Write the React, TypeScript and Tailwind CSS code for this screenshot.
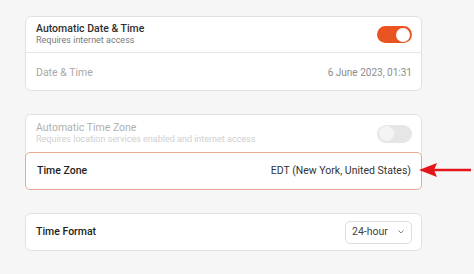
import React from "react";

function Toggle({ on }: { on: boolean }) {
  return on ? (
    <div className="flex h-[17px] w-[35px] items-center justify-end rounded-full bg-[#e95420] pr-[2px]">
      <div className="h-[14px] w-[14px] rounded-full bg-white" />
    </div>
  ) : (
    <div className="flex h-[18px] w-[35px] items-center justify-start rounded-full bg-[#e6e6e6] pl-[2px]">
      <div className="h-[15px] w-[15px] rounded-full bg-[#f4f4f4]" />
    </div>
  );
}

export default function App() {
  return (
    <div
      className="relative h-[274px] w-[474px] overflow-hidden bg-[#f6f6f6] pl-[25px] pt-[16px]"
      style={{ fontFamily: 'Roboto, "Noto Sans", sans-serif' }}
    >
      <div className="flex w-[397px] flex-col gap-[23px]">
        {/* Card 1 */}
        <div className="rounded-[6px] border border-[#e2e2e2] bg-white">
          <div className="flex h-[36px] items-center justify-between border-b border-[#e6e6e6] pl-[10px] pr-[9px]">
            <div className="flex flex-col leading-none">
              <span className="text-[10.5px] font-medium text-[#2f2f2f]">Automatic Date &amp; Time</span>
              <span className="mt-[2px] text-[9px] text-[#7a7a7a]">Requires internet access</span>
            </div>
            <Toggle on />
          </div>
          <div className="flex h-[37px] items-center justify-between pl-[10px] pr-[9px] pt-[2px]">
            <span className="text-[10.5px] text-[#a8a8a8]">Date &amp; Time</span>
            <span className="text-[10px] text-[#8c8c8c]">6 June 2023, 01:31</span>
          </div>
        </div>

        {/* Card 2 */}
        <div className="rounded-[6px] border border-[#e2e2e2] bg-white">
          <div className="flex h-[37px] items-center justify-between pl-[10px] pr-[9px]">
            <div className="flex flex-col leading-none">
              <span className="text-[10.5px] text-[#b0b0b0]">Automatic Time Zone</span>
              <span className="mt-[2px] text-[9px] text-[#cfcfcf]">
                Requires location services enabled and internet access
              </span>
            </div>
            <Toggle on={false} />
          </div>
          <div className="-mx-px -mb-px flex h-[38px] items-center justify-between rounded-[5px] border border-[#e8a996] bg-white pl-[11px] pr-[10px]">
            <span className="text-[10.5px] font-medium text-[#222]">Time Zone</span>
            <span className="text-[10.5px] text-[#333]">EDT (New York, United States)</span>
          </div>
        </div>

        {/* Card 3 */}
        <div className="flex h-[38px] items-center justify-between rounded-[6px] border border-[#e2e2e2] bg-white pl-[10px] pr-[9px]">
          <span className="text-[10.5px] font-medium text-[#222]">Time Format</span>
          <div className="flex h-[23px] w-[67px] items-center gap-[9px] rounded-[5px] border border-[#dedede] pl-[6px]">
            <span className="text-[10.5px] text-[#444]">24-hour</span>
            <svg width="8" height="6" viewBox="0 0 8 6" fill="none">
              <path d="M1.5 1.5 L4 4 L6.5 1.5" stroke="#888" strokeWidth="1" />
            </svg>
          </div>
        </div>
      </div>

      {/* Arrow annotation */}
      <svg className="absolute left-[417px] top-[161px]" width="56" height="18" viewBox="0 0 56 18">
        <path d="M16 7.8 L54 7.8 L54 10.2 L16 10.2 Z" fill="#e3151b" />
        <path d="M2 9 L20 2 L17 9 L20 16 Z" fill="#e3151b" />
      </svg>
    </div>
  );
}
